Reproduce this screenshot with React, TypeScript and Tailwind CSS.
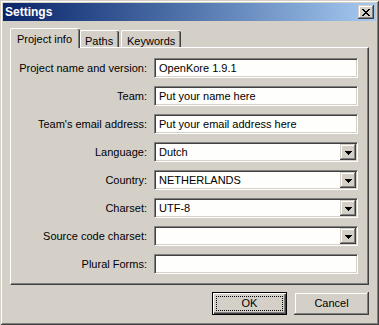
const FONT = { fontFamily: '"Liberation Sans", Arial, sans-serif' };

const RAISED =
  "shadow-[inset_-1px_-1px_0_#404040,inset_1px_1px_0_#d4d0c8,inset_-2px_-2px_0_#808080,inset_2px_2px_0_#ffffff]";

type Field = { label: string; value: string; select?: boolean };

const FIELDS: Field[] = [
  { label: "Project name and version:", value: "OpenKore 1.9.1" },
  { label: "Team:", value: "Put your name here" },
  { label: "Team's email address:", value: "Put your email address here" },
  { label: "Language:", value: "Dutch", select: true },
  { label: "Country:", value: "NETHERLANDS", select: true },
  { label: "Charset:", value: "UTF-8", select: true },
  { label: "Source code charset:", value: "", select: true },
  { label: "Plural Forms:", value: "" },
];

function CloseGlyph() {
  const rows = [0, 1, 2, 3, 4, 5, 6];
  return (
    <svg width="8" height="7" viewBox="0 0 8 7" shapeRendering="crispEdges">
      {rows.map((i) => (
        <g key={i} fill="#000">
          <rect x={i} y={i} width={2} height={1} />
          <rect x={6 - i} y={i} width={2} height={1} />
        </g>
      ))}
    </svg>
  );
}

function DropArrow() {
  return (
    <svg width="7" height="4" viewBox="0 0 7 4" shapeRendering="crispEdges">
      <rect x="0" y="0" width="7" height="1" fill="#000" />
      <rect x="1" y="1" width="5" height="1" fill="#000" />
      <rect x="2" y="2" width="3" height="1" fill="#000" />
      <rect x="3" y="3" width="1" height="1" fill="#000" />
    </svg>
  );
}

function TextBox({ value, select }: { value: string; select?: boolean }) {
  return (
    <div className="flex h-[20px] w-[204px] border border-t-[#808080] border-l-[#808080] border-b-white border-r-white p-[1px] shadow-[inset_1px_1px_0_#404040,inset_-1px_-1px_0_#d4d0c8]">
      <div className="flex h-full min-w-0 flex-1 items-center bg-[#fefefc] pl-[3px] text-[11px] text-black">
        {value}
      </div>
      {select && (
        <div className={`flex h-[16px] w-[16px] shrink-0 items-center justify-center bg-[#d4d0c8] pt-[1px] ${RAISED}`}>
          <DropArrow />
        </div>
      )}
    </div>
  );
}

export default function App() {
  return (
    <div
      className="flex h-[325px] w-[379px] flex-col bg-[#d4d0c8] p-[3px] text-black shadow-[inset_1px_1px_0_#d4d0c8,inset_-1px_-1px_0_#404040,inset_2px_2px_0_#ffffff,inset_-2px_-2px_0_#808080]"
      style={FONT}
    >
      {/* title bar */}
      <div className="flex h-[18px] shrink-0 items-center justify-between bg-linear-to-r from-[#0a246a] to-[#a6caf0] pl-[2px] pr-[2px]">
        <span className="text-[12px] font-bold leading-none text-white">Settings</span>
        <div className={`flex h-[14px] w-[16px] items-center justify-center bg-[#d4d0c8] ${RAISED}`}>
          <CloseGlyph />
        </div>
      </div>

      <div className="flex flex-col px-[7px] pt-[7px]">
        {/* tabs */}
        <div className="flex h-[19px] items-end">
          <div className="relative z-10 mb-[-1px] flex h-[20px] w-[70px] items-start rounded-t-[2px] border-l border-t border-white bg-[#d4d0c8] pl-[6px] pt-[2px] text-[11px] shadow-[inset_-1px_0_0_#404040,inset_-2px_0_0_#808080]">
            Project info
          </div>
          <div className="flex h-[17px] w-[39px] items-start rounded-t-[2px] border-l border-t border-white pl-[4px] pt-[2px] text-[11px] shadow-[inset_-1px_0_0_#404040,inset_-2px_0_0_#808080]">
            Paths
          </div>
          <div className="ml-[2px] flex h-[17px] w-[60px] items-start rounded-t-[2px] border-l border-t border-white pl-[5px] pt-[2px] text-[11px] shadow-[inset_-1px_0_0_#404040,inset_-2px_0_0_#808080]">
            Keywords
          </div>
        </div>

        {/* panel */}
        <div className="h-[238px] border border-t-white border-l-white border-r-[#404040] border-b-[#404040] pr-[10px] pt-[10px] shadow-[inset_-1px_-1px_0_#808080]">
          <div className="grid grid-cols-[1fr_204px] gap-x-[7px] gap-y-[8px]">
            {FIELDS.map((f) => (
              <div key={f.label} className="contents">
                <div className="flex h-[20px] items-center justify-end text-[11px]">{f.label}</div>
                <TextBox value={f.value} select={f.select} />
              </div>
            ))}
          </div>
        </div>

        {/* buttons */}
        <div className="flex justify-end gap-[7px] pt-[7px]">
          <button className="relative flex h-[23px] w-[75px] items-center justify-center border border-black bg-[#d4d0c8] text-[11px] shadow-[inset_1px_1px_0_#ffffff,inset_-1px_-1px_0_#404040,inset_-2px_-2px_0_#808080]">
            <span className="absolute inset-[3px] border border-dotted border-black" />
            OK
          </button>
          <button className={`flex h-[23px] w-[75px] items-center justify-center bg-[#d4d0c8] text-[11px] ${RAISED}`}>
            Cancel
          </button>
        </div>
      </div>
    </div>
  );
}
